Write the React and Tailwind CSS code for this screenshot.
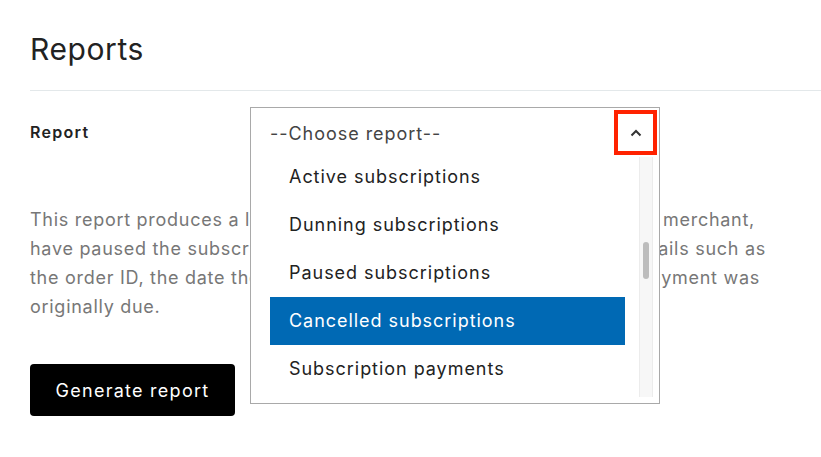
import React from "react";

const font = { fontFamily: "Inter, 'Open Sans', sans-serif" };

function Line({ w, left, right }) {
  return (
    <div className={`flex ${w} justify-between whitespace-nowrap`}>
      <span>{left}</span>
      <span>{right}</span>
    </div>
  );
}

const options = [
  "Active subscriptions",
  "Dunning subscriptions",
  "Paused subscriptions",
  "Cancelled subscriptions",
  "Subscription payments",
];

export default function App() {
  return (
    <div
      className="min-h-[457px] w-[821px] bg-white pl-[30px] pt-[29px] tracking-[0.06em] text-[#222]"
      style={font}
    >
      <h1 className="text-[30px] leading-[40px] font-normal tracking-[0.02em]">Reports</h1>
      <div className="mt-[21px] h-px bg-[#e3e8ea]" />

      <div className="mt-[16px] flex h-[50px]">
        <div className="w-[220px] text-[16px] font-semibold leading-[50px] tracking-[0.08em]">Report</div>
        <div className="relative w-[410px]">
          <div className="absolute left-0 top-0 z-10 h-[297px] w-[410px] border border-[#a9a9a9] bg-white">
            <div className="relative h-[45px] pl-[19px] pt-[14px] text-[18px] leading-[24px] text-[#444]">
              --Choose report--
              <div className="absolute right-[2px] top-[2px] flex h-[45px] w-[43px] items-center justify-center border-[4px] border-[#ff2200]">
                <svg width="12" height="8" viewBox="0 0 12 8">
                  <polyline points="1.5,6.5 6,2 10.5,6.5" fill="none" stroke="#333" strokeWidth="2" />
                </svg>
              </div>
            </div>
            <div className="flex">
              <div className="ml-[19px] w-[355px]">
                {options.map((o) => (
                  <div
                    key={o}
                    className={`h-[48px] pl-[19px] text-[18px] leading-[48px] ${
                      o === "Cancelled subscriptions" ? "bg-[#0069b4] text-white" : "text-[#222]"
                    }`}
                  >
                    {o}
                  </div>
                ))}
              </div>
              <div className="ml-[14px] mt-[4px] h-[240px] w-[14px] border-x border-[#ececec] bg-[#f7f7f7] px-[3px] pt-[85px]">
                <div className="h-[37px] w-[6px] rounded-full bg-[#bdbdbd]" />
              </div>
            </div>
          </div>
        </div>
      </div>

      <div className="mt-[48px] text-[18px] leading-[29px] tracking-[0.04em] text-[#777]">
        <Line w="w-[725px]" left="This report produces a list of" right="customers, or the merchant," />
        <Line w="w-[736px]" left="have paused the subscription." right="It includes details such as" />
        <Line w="w-[730px]" left="the order ID, the date the" right="and when payment was" />
        <div>originally due.</div>
      </div>

      <button className="mt-[43px] flex h-[52px] w-[205px] items-center justify-center rounded-[4px] bg-black text-[18px] tracking-[0.07em] text-white">
        Generate report
      </button>
    </div>
  );
}
